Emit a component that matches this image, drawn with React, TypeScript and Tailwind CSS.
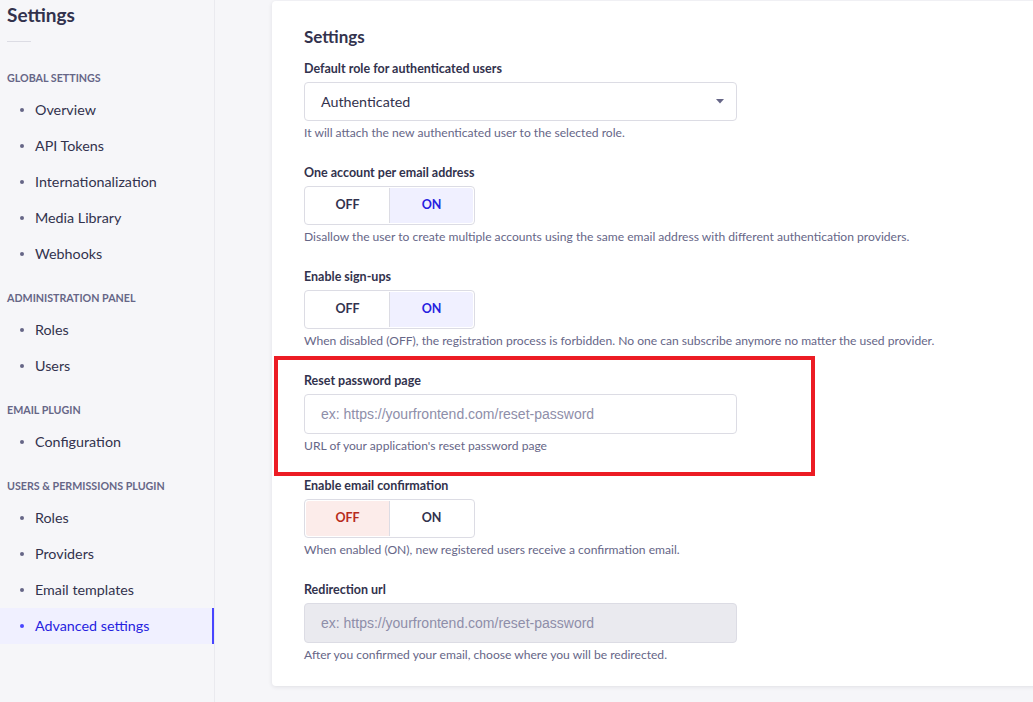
import React from "react";

const font = { fontFamily: 'Lato, "Noto Sans", sans-serif' };

function NavItem({ label, active }: { label: string; active?: boolean }) {
  return (
    <div
      className={
        "flex h-[36px] items-center pl-[20px] " +
        (active ? "bg-[#f0f0ff] border-r-2 border-[#4945ff] text-[#271fe0]" : "text-[#32324d]")
      }
    >
      <span className={"mr-[11px] h-[4px] w-[4px] rounded-full " + (active ? "bg-[#4945ff]" : "bg-[#666687]")} />
      <span className="text-[14.3px] leading-[20px]">{label}</span>
    </div>
  );
}

function Section({ title, items, active }: { title: string; items: string[]; active?: string }) {
  return (
    <div className="flex flex-col">
      <div className="h-[26px] pl-[7px] text-[10.7px] font-bold uppercase leading-[16px] text-[#666687] flex items-end">
        {title}
      </div>
      <div className="mt-[6px] flex flex-col">
        {items.map((i) => (
          <NavItem key={i} label={i} active={i === active} />
        ))}
      </div>
    </div>
  );
}

function Label({ children }: { children: React.ReactNode }) {
  return <div className="text-[12.5px] font-bold leading-[16px] text-[#32324d]">{children}</div>;
}

function Hint({ children }: { children: React.ReactNode }) {
  return <div className="mt-[4px] text-[12.1px] leading-[16px] text-[#666687]">{children}</div>;
}

function Toggle({ on }: { on: boolean }) {
  return (
    <div className="mt-[5px] flex h-[39px] w-[171px] rounded-[4px] border border-[#dcdce4] bg-white p-[1px] text-[12.5px] font-bold">
      <div
        className={
          "flex flex-1 items-center justify-center rounded-l-[3px] " +
          (!on ? "bg-[#fcecea] text-[#b72b1a]" : "text-[#32324d]")
        }
      >
        OFF
      </div>
      <div
        className={
          "flex flex-1 items-center justify-center rounded-r-[3px] border-l border-[#dcdce4] " +
          (on ? "bg-[#f0f0ff] text-[#271fe0]" : "text-[#32324d]")
        }
      >
        ON
      </div>
    </div>
  );
}

function TextInput({ disabled }: { disabled?: boolean }) {
  return (
    <div
      className={
        "mt-[5px] flex h-[40px] w-[433px] items-center rounded-[4px] border border-[#dcdce4] pl-[16px] text-[14px] text-[#8e8ea9] " +
        (disabled ? "bg-[#eaeaef]" : "bg-white")
      }
      style={{ fontFamily: '"Liberation Sans", Arial, sans-serif' }}
    >
      ex: https://yourfrontend.com/reset-password
    </div>
  );
}

export default function App() {
  return (
    <div className="flex h-[702px] w-[1033px] overflow-hidden bg-[#f6f6f9]" style={font}>
      <aside className="flex w-[215px] shrink-0 flex-col border-r border-[#eaeaef] bg-[#f6f6f9]">
        <div className="pl-[7px] pt-[1px] text-[19px] font-bold leading-[28px] text-[#32324d]">Settings</div>
        <div className="ml-[7px] mt-[12px] h-px w-[24px] bg-[#dcdce4]" />
        <div className="mt-[18px] flex flex-col gap-[8px]">
          <Section title="Global Settings" items={["Overview", "API Tokens", "Internationalization", "Media Library", "Webhooks"]} />
          <Section title="Administration Panel" items={["Roles", "Users"]} />
          <Section title="Email Plugin" items={["Configuration"]} />
          <Section
            title="Users & Permissions Plugin"
            items={["Roles", "Providers", "Email templates", "Advanced settings"]}
            active="Advanced settings"
          />
        </div>
      </aside>
      <main className="flex-1 overflow-hidden pl-[57px] pt-[1px]">
        <div className="h-[685px] w-[800px] rounded-[4px] bg-white px-[32px] pt-[24px] shadow-[0_1px_4px_rgba(33,33,52,0.1)]">
          <div className="text-[17px] font-bold leading-[24px] text-[#32324d]">Settings</div>
          <div className="mt-[12px] flex flex-col gap-[24px]">
            <div>
              <Label>Default role for authenticated users</Label>
              <div className="mt-[5px] flex h-[39px] w-[433px] items-center justify-between rounded-[4px] border border-[#dcdce4] bg-white pl-[16px] pr-[12px] text-[14.3px] text-[#32324d]">
                <span>Authenticated</span>
                <svg width="8" height="5" viewBox="0 0 8 5">
                  <path d="M0 0h8L4 4.5z" fill="#666687" />
                </svg>
              </div>
              <Hint>It will attach the new authenticated user to the selected role.</Hint>
            </div>
            <div>
              <Label>One account per email address</Label>
              <Toggle on />
              <Hint>
                Disallow the user to create multiple accounts using the same email address with different authentication
                providers.
              </Hint>
            </div>
            <div>
              <Label>Enable sign-ups</Label>
              <Toggle on />
              <Hint>
                When disabled (OFF), the registration process is forbidden. No one can subscribe anymore no matter the used
                provider.
              </Hint>
            </div>
            <div className="relative">
              <div className="pointer-events-none absolute left-[-30px] top-[-17px] h-[120px] w-[541px] border-4 border-[#ec1c24]" />
              <Label>Reset password page</Label>
              <TextInput />
              <Hint>URL of your application's reset password page</Hint>
            </div>
            <div>
              <Label>Enable email confirmation</Label>
              <Toggle on={false} />
              <Hint>When enabled (ON), new registered users receive a confirmation email.</Hint>
            </div>
            <div>
              <Label>Redirection url</Label>
              <TextInput disabled />
              <Hint>After you confirmed your email, choose where you will be redirected.</Hint>
            </div>
          </div>
        </div>
      </main>
    </div>
  );
}
